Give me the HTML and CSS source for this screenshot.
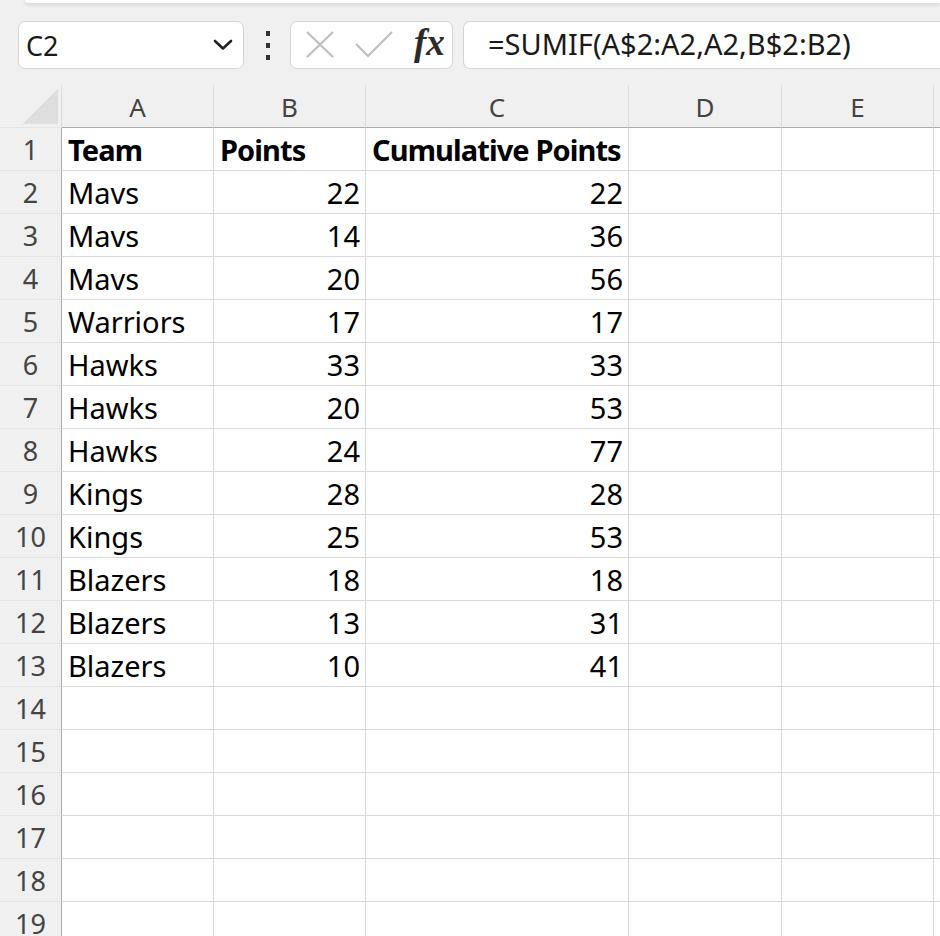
FILE: index.html
```html
<!DOCTYPE html>
<html lang="en">
<head>
    <meta charset="UTF-8">
    <title>SUMIF cumulative points</title>
    <link rel="stylesheet" href="styles.css">
</head>
<body>
    <div class="ribbon-edge"></div>

    <div class="formula-bar">
        <div class="name-box">
            <span class="name-value">C2</span>
            <svg class="chevron" width="20" height="12" viewBox="0 0 20 12">
                <polyline points="2,2 10,9.5 18,2" fill="none" stroke="#222" stroke-width="2.6" stroke-linecap="round" stroke-linejoin="round"/>
            </svg>
        </div>
        <div class="more-dots">
            <span></span><span></span><span></span>
        </div>
        <div class="formula-tools">
            <svg class="tool" width="30" height="28" viewBox="0 0 30 28">
                <line x1="2" y1="1" x2="28" y2="26" stroke="#bcbcbc" stroke-width="2"/>
                <line x1="28" y1="1" x2="2" y2="26" stroke="#bcbcbc" stroke-width="2"/>
            </svg>
            <svg class="tool" width="38" height="28" viewBox="0 0 38 28">
                <polyline points="1,13 13,25 37,1" fill="none" stroke="#bcbcbc" stroke-width="2"/>
            </svg>
            <span class="fx">fx</span>
        </div>
        <div class="formula-input">=SUMIF(A$2:A2,A2,B$2:B2)</div>
    </div>

    <div class="sheet" id="sheet">
        <div class="corner"><div class="select-all"></div></div>
        <div class="col-head">A</div>
        <div class="col-head">B</div>
        <div class="col-head">C</div>
        <div class="col-head">D</div>
        <div class="col-head">E</div>
        <div class="col-head"></div>
    </div>

    <script>
        // rijen van de tabel
        const data = [
            ['Team', 'Points', 'Cumulative Points'],
            ['Mavs', 22, 22],
            ['Mavs', 14, 36],
            ['Mavs', 20, 56],
            ['Warriors', 17, 17],
            ['Hawks', 33, 33],
            ['Hawks', 20, 53],
            ['Hawks', 24, 77],
            ['Kings', 28, 28],
            ['Kings', 25, 53],
            ['Blazers', 18, 18],
            ['Blazers', 13, 31],
            ['Blazers', 10, 41]
        ];

        const sheet = document.getElementById('sheet');
        for (let r = 1; r <= 19; r++) {
            const row = data[r - 1] || [];
            let html = `<div class="row-head">${r}</div>`;
            for (let c = 0; c < 6; c++) {
                const v = row[c];
                let cls = 'cell';
                if (r === 1 && v !== undefined) cls += ' bold';
                if (typeof v === 'number') cls += ' num';
                html += `<div class="${cls}">${v !== undefined ? v : ''}</div>`;
            }
            sheet.insertAdjacentHTML('beforeend', html);
        }
    </script>
</body>
</html>
```

FILE: styles.css
```css
body {
    margin: 0;
    background-color: #f0f0f0;
    font-family: 'Noto Sans', 'Open Sans', sans-serif;
    color: #000;
    overflow: hidden;
}
.ribbon-edge {
    height: 3px;
    margin-left: 25px;
    background-color: #fff;
    border-bottom-left-radius: 6px;
    box-shadow: 0 1px 4px rgba(0, 0, 0, 0.18);
}
.formula-bar {
    display: flex;
    align-items: center;
    height: 48px;
    margin-top: 18px;
    padding-left: 18px;
}
.name-box {
    display: flex;
    align-items: center;
    justify-content: space-between;
    box-sizing: border-box;
    width: 226px;
    height: 48px;
    padding: 0 10px 0 7px;
    background-color: #fff;
    border: 1px solid #d5d5d5;
    border-radius: 7px;
}
.name-value {
    font-size: 27px;
    color: #1a1a1a;
}
.more-dots {
    display: flex;
    flex-direction: column;
    gap: 7px;
    width: 46px;
    padding-left: 2px;
    box-sizing: border-box;
    align-items: center;
}
.more-dots span {
    width: 4px;
    height: 5px;
    background-color: #333;
}
.formula-tools {
    display: flex;
    align-items: center;
    box-sizing: border-box;
    width: 163px;
    height: 48px;
    padding-left: 14px;
    background-color: #fff;
    border: 1px solid #d5d5d5;
    border-radius: 7px;
}
.tool {
    margin-right: 20px;
}
.fx {
    font-family: 'Liberation Serif', 'DejaVu Serif', serif;
    font-style: italic;
    font-weight: bold;
    font-size: 37px;
    line-height: 40px;
    color: #2b2b2b;
    margin-left: 1px;
    margin-top: -4px;
}
.formula-input {
    flex: 1;
    box-sizing: border-box;
    height: 48px;
    margin-left: 10px;
    padding-left: 24px;
    background-color: #fff;
    border: 1px solid #d5d5d5;
    border-right: none;
    border-radius: 7px 0 0 7px;
    font-size: 29px;
    line-height: 44px;
    color: #1a1a1a;
}
.sheet {
    display: grid;
    grid-template-columns: 62px 152px 152px 263px 153px 152px 1fr;
    grid-auto-rows: 43px;
    margin-top: 16px;
}
.corner {
    position: relative;
    border-right: 1px solid #dcdcdc;
    border-bottom: 1px solid #e4e4e4;
}
.select-all {
    position: absolute;
    right: 3px;
    bottom: 3px;
    width: 36px;
    height: 36px;
    background: linear-gradient(to bottom right, transparent 50%, #dedede 50%);
}
.col-head {
    display: flex;
    align-items: center;
    justify-content: center;
    padding-top: 2px;
    font-size: 26px;
    color: #444;
    border-right: 1px solid #dcdcdc;
    border-bottom: 1px solid #a9a9a9;
}
.row-head {
    display: flex;
    align-items: center;
    justify-content: center;
    padding-top: 1px;
    font-size: 27px;
    color: #444;
    border-right: 1px solid #a9a9a9;
    border-bottom: 1px solid #e4e4e4;
}
.cell {
    overflow: hidden;
    white-space: nowrap;
    padding: 2px 5px 0 6px;
    font-size: 29px;
    line-height: 40px;
    background-color: #fff;
    border-right: 1px solid #dadada;
    border-bottom: 1px solid #dadada;
}
.bold {
    font-weight: bold;
    letter-spacing: -0.9px;
}
.num {
    text-align: right;
}
```
